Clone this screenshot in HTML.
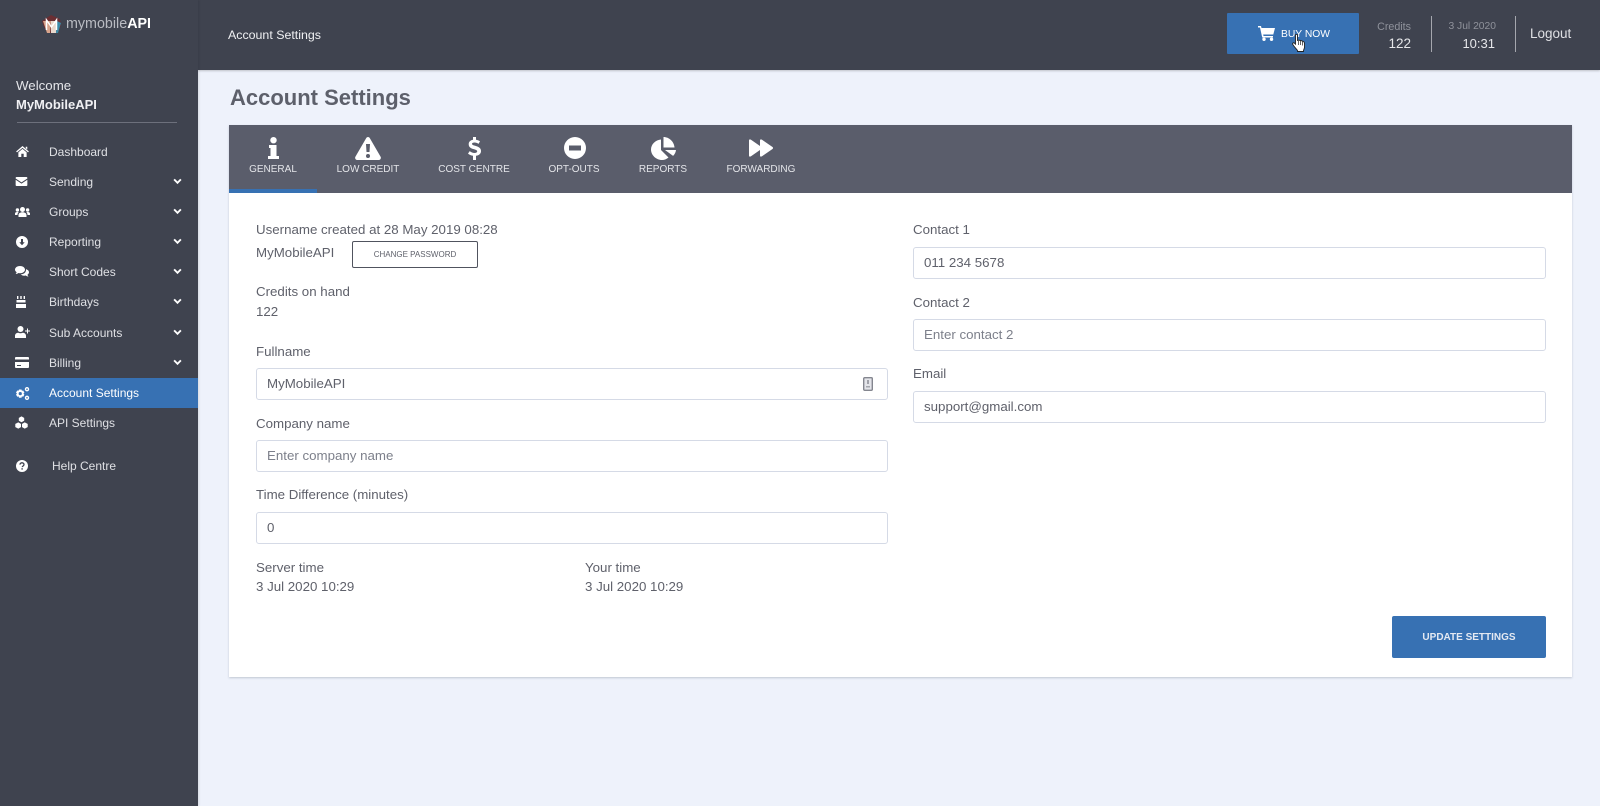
<!DOCTYPE html>
<html>
<head>
<meta charset="utf-8">
<style>
*{box-sizing:border-box}
html,body{margin:0;padding:0}
body{width:1600px;height:806px;overflow:hidden;position:relative;background:#eef2fb;font-family:"Liberation Sans",sans-serif;color:#5f616b}
.a{position:absolute;white-space:nowrap}
.t{position:absolute;white-space:nowrap;height:20px;line-height:20px;font-size:13.3px}
#side{position:absolute;left:0;top:0;width:198px;height:806px;background:#3f434f;box-shadow:1px 0 2px rgba(0,0,0,.1)}
#head{position:absolute;left:198px;top:0;width:1402px;height:70px;background:#3f434f;box-shadow:0 1px 2px rgba(0,0,0,.2)}
.m{position:absolute;left:49px;height:20px;line-height:20px;font-size:12px;color:#dfe0e4;white-space:nowrap}
.i{position:absolute;fill:#fff}
.c{position:absolute;left:172px;width:11px;height:7px;fill:none;stroke:#fff;stroke-width:2.2}
#card{position:absolute;left:229px;top:125px;width:1343px;height:552px;background:#fff;box-shadow:0 1px 2px rgba(60,70,90,.25)}
#tabs{position:absolute;left:229px;top:125px;width:1343px;height:68px;background:#5a5d6b}
.tab{position:absolute;top:163px;width:120px;height:14px;line-height:14px;text-align:center;font-size:10px;color:#e4e5e9;white-space:nowrap}
.inp{position:absolute;height:32px;border:1px solid #d5dae6;border-radius:3px;background:#fff;padding-left:10px;line-height:30px;font-size:13.3px;color:#5f616b;white-space:nowrap}
.ph{color:#7d808b}
</style>
</head>
<body>
<div id="head"></div>
<div id="side"></div>

<svg class="a" style="left:42px;top:15px" width="20" height="19" viewBox="0 0 20 19"><polygon points="9,0 18,4 19,10 16,18 6,18 2,12 0,6" fill="#6b2f33"/><polygon points="1,6 9,6 8,18 5,18" fill="#d8a48c"/><polygon points="9,6 15,6 14,18 9,18" fill="#e8d8cc"/><polygon points="15,6 19,8 16,18 14,18" fill="#3b8aa8"/><path d="M4.500 15V5l5 7 5-7v10" fill="none" stroke="#fff" stroke-width="1.500"/></svg>
<div class="a" style="left:66px;top:15px;line-height:18px;font-size:14.300px;color:#b9bbc2">mymobile<b style="color:#fff">API</b></div>

<div class="a" style="left:16px;top:76px;line-height:20px;font-size:13.300px;color:#e4e5e9">Welcome</div>
<div class="a" style="left:16px;top:95px;line-height:20px;font-size:13px;font-weight:bold;color:#f0f0f3">MyMobileAPI</div>
<div class="a" style="left:17px;top:122px;width:160px;height:1px;background:#6d707c"></div>

<div class="a" style="left:0;top:378px;width:198px;height:30px;background:#3771b3"></div>

<svg class="i" style="left:16px;top:146px" width="13" height="11" viewBox="0 0 14 12"><path d="M7 0l7 6-1 1-6-5-6 5-1-1zM2.500 7L7 3.200 11.500 7v5H8.300V8.500H5.700V12H2.500zM10.500 .8h1.700v3l-1.700-1.400z"/></svg>
<div class="m" style="top:142px">Dashboard</div>

<svg class="i" style="left:15px;top:177px" width="13" height="9" viewBox="0 0 13 10"><path d="M1 0h11a1 1 0 0 1 1 1v.6L6.500 6 0 1.600V1a1 1 0 0 1 1-1zM0 3l6.500 4.400L13 3v6a1 1 0 0 1-1 1H1a1 1 0 0 1-1-1z"/></svg>
<div class="m" style="top:172px">Sending</div>
<svg class="c" style="top:178px" viewBox="0 0 13 8"><path d="M2.500 1.500l4 4 4-4"/></svg>

<svg class="i" style="left:15px;top:207px" width="15" height="10" viewBox="0 0 15 10"><circle cx="7.500" cy="2.500" r="2.500"/><circle cx="2.400" cy="3" r="1.700"/><circle cx="12.600" cy="3" r="1.700"/><path d="M3.500 10V8c0-1.700 1.500-2.800 4-2.800s4 1.100 4 2.800v2zM0 8V6.500C0 5.600 1 5 2.400 5c.6 0 1 .1 1.300.3C2.800 6 2.500 7 2.500 8zM15 8V6.500c0-.9-1-1.500-2.400-1.500-.6 0-1 .1-1.300.3.900.7 1.200 1.700 1.200 2.700z"/></svg>
<div class="m" style="top:202px">Groups</div>
<svg class="c" style="top:208px" viewBox="0 0 13 8"><path d="M2.500 1.500l4 4 4-4"/></svg>

<svg class="i" style="left:16px;top:236px" width="12" height="12" viewBox="0 0 12 12"><path fill-rule="evenodd" d="M6 0a6 6 0 1 1 0 12A6 6 0 0 1 6 0zM5 3v3.200H3.300L6 9.200l2.700-3H7V3z"/></svg>
<div class="m" style="top:232px">Reporting</div>
<svg class="c" style="top:238px" viewBox="0 0 13 8"><path d="M2.500 1.500l4 4 4-4"/></svg>

<svg class="i" style="left:15px;top:266px" width="14" height="12" viewBox="0 0 14 12"><path d="M5 0c2.800 0 5 1.600 5 3.600S7.800 7.200 5 7.200c-.6 0-1.100-.1-1.600-.2C2.600 7.700 1.500 8 .6 8c.5-.5.900-1.100 1-1.800C.6 5.500 0 4.600 0 3.600 0 1.600 2.200 0 5 0z"/><path d="M11 3.300c1.800.4 3 1.600 3 3 0 1-.6 1.800-1.500 2.400.1.700.5 1.300 1 1.800-.9 0-1.900-.3-2.700-1-.5.100-1 .2-1.500.2-1.500 0-2.800-.5-3.600-1.300 3 0 5.300-1.900 5.300-4.500z"/></svg>
<div class="m" style="top:262px">Short Codes</div>
<svg class="c" style="top:268px" viewBox="0 0 13 8"><path d="M2.500 1.500l4 4 4-4"/></svg>

<svg class="i" style="left:16px;top:296px" width="10" height="12" viewBox="0 0 10 12"><path d="M1 0h1.400v3H1zM4.300 0h1.400v3H4.300zM7.600 0H9v3H7.600zM.5 4h9v2.500h-9zM0 8h10v4H0z"/></svg>
<div class="m" style="top:292px">Birthdays</div>
<svg class="c" style="top:298px" viewBox="0 0 13 8"><path d="M2.500 1.500l4 4 4-4"/></svg>

<svg class="i" style="left:15px;top:326px" width="15" height="12" viewBox="0 0 15 12"><circle cx="5.500" cy="3" r="3"/><path d="M0 12V9.800C0 7.800 1.800 6.800 3.200 6.800c.7.300 1.500.5 2.300.5s1.600-.2 2.300-.5c1.400 0 3.200 1 3.200 3V12zM12 2.500h1v2h2v1h-2v2h-1v-2h-2v-1h2z"/></svg>
<div class="m" style="top:323px">Sub Accounts</div>
<svg class="c" style="top:329px" viewBox="0 0 13 8"><path d="M2.500 1.500l4 4 4-4"/></svg>

<svg class="i" style="left:15px;top:357px" width="14" height="11" viewBox="0 0 14 11"><path d="M1 0h12a1 1 0 0 1 1 1v1.500H0V1a1 1 0 0 1 1-1zM0 5h14v5a1 1 0 0 1-1 1H1a1 1 0 0 1-1-1zm2 3v1h4V8z" fill-rule="evenodd"/></svg>
<div class="m" style="top:353px">Billing</div>
<svg class="c" style="top:359px" viewBox="0 0 13 8"><path d="M2.500 1.500l4 4 4-4"/></svg>

<svg class="i" style="left:15px;top:387px" width="15" height="13" viewBox="0 0 15 13"><path fill-rule="evenodd" d="M4 2.500h2.500l.4 1.300 1.300-.3 1.200 2.100-1 1 1 1-1.200 2.100-1.300-.3-.4 1.300H4l-.4-1.300-1.300.3L1 7.600l1-1-1-1 1.200-2.100 1.300.3zM5.250 5a1.600 1.600 0 1 0 0 3.200 1.600 1.600 0 0 0 0-3.200z"/><path fill-rule="evenodd" d="M12 0a2.200 2.200 0 1 1 0 4.400A2.200 2.200 0 0 1 12 0zm0 1.400a.8.8 0 1 0 0 1.600.8.8 0 0 0 0-1.600zM12 8.600a2.200 2.200 0 1 1 0 4.400 2.200 2.200 0 0 1 0-4.400zm0 1.400a.8.8 0 1 0 0 1.600.8.8 0 0 0 0-1.600z"/></svg>
<div class="m" style="top:383px;color:#fff">Account Settings</div>

<svg class="i" style="left:15px;top:416px" width="13" height="13" viewBox="0 0 13 13"><path d="M6.500 0l3 1.700v3.200l-3 1.700-3-1.700V1.700zM3.300 6l3 1.700v3.600L3.300 13 0 11.300V7.700zM9.700 6L13 7.700v3.600L9.700 13l-3-1.700V7.700z" stroke="#3f434f" stroke-width=".6"/></svg>
<div class="m" style="top:413px">API Settings</div>

<svg class="i" style="left:16px;top:460px" width="12" height="12" viewBox="0 0 12 12"><circle cx="6" cy="6" r="6"/><path d="M4 4.600C4 3.400 5 2.800 6 2.800s2 .6 2 1.700c0 1.500-1.700 1.400-1.700 2.600" fill="none" stroke="#3f434f" stroke-width="1.300"/><rect x="5.400" y="8.200" width="1.400" height="1.400" fill="#3f434f"/></svg>
<div class="m" style="top:456px;left:52px">Help Centre</div>

<div class="a" style="left:228px;top:25px;line-height:20px;font-size:12.400px;color:#f0f1f3">Account Settings</div>

<div class="a" style="left:1227px;top:13px;width:132px;height:41px;background:#3771b3;border-radius:1px"></div>
<svg class="i" style="left:1258px;top:26px" width="17" height="15" viewBox="0 0 17 15"><path d="M0 0h3l.5 2H17l-1.700 6.500H5.200l.3 1.500H15v1.500H4.200L2 1.500H0z"/><circle cx="6" cy="13.300" r="1.700"/><circle cx="13.500" cy="13.300" r="1.700"/></svg>
<div class="a" style="left:1281px;top:27px;line-height:16px;font-size:10.300px;color:#fff">BUY NOW</div>
<svg class="a" style="left:1292px;top:34px" width="14" height="19" viewBox="0 0 14 19"><path d="M3.500 1.200c0-1.200 2-1.200 2 0v5.300l1.500-.3 1.500.3 1.500.4 1.500.6c1 .5 1 1.500 1 2.500v3c0 1.500-.7 2.200-1 3.500v1H5.500v-1c-1-1.500-3.500-4-4.700-6-.7-1.300.8-2.300 1.700-1.300l1 1z" fill="#fff" stroke="#222" stroke-width=".9"/><path d="M6.500 7v4M8.500 7v4M10.500 7.500v4" stroke="#222" stroke-width=".7"/></svg>

<div class="a" style="left:1300px;top:19px;width:111px;text-align:right;line-height:16px;font-size:10.700px;color:#8f929b">Credits</div>
<div class="a" style="left:1300px;top:35px;width:111px;text-align:right;line-height:18px;font-size:13.500px;color:#e6e7ea">122</div>
<div class="a" style="left:1431px;top:16px;width:1px;height:36px;background:#a5a7ae"></div>
<div class="a" style="left:1400px;top:19px;width:96px;text-align:right;line-height:16px;font-size:10.300px;color:#8f929b">3 Jul 2020</div>
<div class="a" style="left:1400px;top:35px;width:95px;text-align:right;line-height:18px;font-size:13px;color:#e6e7ea">10:31</div>
<div class="a" style="left:1515px;top:16px;width:1px;height:36px;background:#a5a7ae"></div>
<div class="a" style="left:1530px;top:25px;line-height:18px;font-size:13.500px;color:#dfe0e4">Logout</div>

<div class="a" style="left:230px;top:84px;line-height:28px;font-size:22px;font-weight:bold;color:#5d606b">Account Settings</div>

<div id="card"></div>
<div id="tabs"></div>
<div class="a" style="left:229px;top:189px;width:88px;height:4px;background:#3771b3"></div>

<svg class="i" style="left:268px;top:137px" width="11" height="22" viewBox="0 0 11 22"><circle cx="5.500" cy="3.200" r="3.200"/><path d="M1 8h7.500v11H11v3H0v-3h2.500v-8H1z"/></svg>
<svg class="i" style="left:355px;top:137px" width="26" height="23" viewBox="0 0 26 23"><path fill-rule="evenodd" d="M13 0c.8 0 1.400.5 1.800 1.100L25.600 19.800c.8 1.400-.2 3.200-1.900 3.200H2.300C.6 23-.4 21.200.4 19.800L11.200 1.100C11.600.5 12.200 0 13 0zm-2 7l.5 8h3l.5-8zm2 10a2 2 0 1 0 0 4 2 2 0 0 0 0-4z"/></svg>
<svg class="i" style="left:468px;top:137px" width="13" height="23" viewBox="0 0 13 23"><path d="M5 0h3v2.800c1.500.2 3 .8 4 1.600l-1.500 2.500C9.300 6 8 5.500 6.500 5.500 5 5.500 4 6 4 6.900c0 1 1.300 1.400 3.500 2 3 .9 5.500 2 5.500 5.100 0 2.700-2 4.400-5 4.800V23H5v-4.200c-2-.3-3.700-1.100-5-2.200l1.700-2.500c1.500 1.200 3.100 1.900 4.800 1.900 1.700 0 2.700-.6 2.700-1.700 0-1.100-1.200-1.500-3.500-2.200C2.800 11.300.7 10 .7 7.200.7 4.900 2.400 3.200 5 2.800z"/></svg>
<svg class="i" style="left:564px;top:137px" width="22" height="22" viewBox="0 0 22 22"><path fill-rule="evenodd" d="M11 0a11 11 0 1 1 0 22A11 11 0 0 1 11 0zM5 8.500v5h12v-5z"/></svg>
<svg class="i" style="left:651px;top:137px" width="25" height="23" viewBox="0 0 25 23"><path d="M10 2.500V13l7.500 7.500C15.700 22 13.500 23 11 23 5 23 0 18 0 12.500 0 7.300 4.500 3 10 2.500z"/><path d="M12.500 0C18 0 23 4.500 23.500 10.500H12.500z"/><path d="M14 13h11c-.3 2.400-1.300 4.400-2.900 5.900z"/></svg>
<svg class="i" style="left:749px;top:139px" width="24" height="18" viewBox="0 0 24 18"><path d="M0 1.500C0 .3 1 0 2 .7L11 7V1.500C11 .3 12 0 13 .7L23.500 8c.7.5.7 1.500 0 2L13 17.300c-1 .7-2 .4-2-.8V11l-9 6.300c-1 .7-2 .4-2-.8z"/></svg>

<div class="tab" style="left:213px">GENERAL</div>
<div class="tab" style="left:308px">LOW CREDIT</div>
<div class="tab" style="left:414px">COST CENTRE</div>
<div class="tab" style="left:514px">OPT-OUTS</div>
<div class="tab" style="left:603px">REPORTS</div>
<div class="tab" style="left:701px">FORWARDING</div>

<div class="t" style="left:256px;top:220px">Username created at 28 May 2019 08:28</div>
<div class="t" style="left:256px;top:243px">MyMobileAPI</div>
<div class="a" style="left:352px;top:241px;width:126px;height:27px;border:1px solid #50535e;border-radius:2px;background:#fff;text-align:center;line-height:25px;font-size:8px;color:#5f616b">CHANGE PASSWORD</div>
<div class="t" style="left:256px;top:282px">Credits on hand</div>
<div class="t" style="left:256px;top:302px">122</div>
<div class="t" style="left:256px;top:342px">Fullname</div>
<div class="inp" style="left:256px;top:368px;width:632px">MyMobileAPI</div>
<svg class="a" style="left:863px;top:377px" width="10" height="14" viewBox="0 0 10 14"><rect x=".7" y=".7" width="8.600" height="12.600" rx="1" fill="#e4e5ea" stroke="#84868f" stroke-width="1.400"/><rect x="4.300" y="3" width="1.400" height="4" fill="#84868f"/><rect x="3" y="9" width="4" height="1.500" fill="#a5a7ae"/></svg>
<div class="t" style="left:256px;top:414px">Company name</div>
<div class="inp ph" style="left:256px;top:440px;width:632px">Enter company name</div>
<div class="t" style="left:256px;top:485px">Time Difference (minutes)</div>
<div class="inp" style="left:256px;top:512px;width:632px">0</div>
<div class="t" style="left:256px;top:558px">Server time</div>
<div class="t" style="left:256px;top:577px">3 Jul 2020 10:29</div>
<div class="t" style="left:585px;top:558px">Your time</div>
<div class="t" style="left:585px;top:577px">3 Jul 2020 10:29</div>

<div class="t" style="left:913px;top:220px">Contact 1</div>
<div class="inp" style="left:913px;top:247px;width:633px">011 234 5678</div>
<div class="t" style="left:913px;top:293px">Contact 2</div>
<div class="inp ph" style="left:913px;top:319px;width:633px">Enter contact 2</div>
<div class="t" style="left:913px;top:364px">Email</div>
<div class="inp" style="left:913px;top:391px;width:633px">support@gmail.com</div>

<div class="a" style="left:1392px;top:616px;width:154px;height:42px;background:#3771b3;border-radius:2px;text-align:center;line-height:44px;font-size:10px;font-weight:bold;color:#e4e9f2">UPDATE SETTINGS</div>
</body>
</html>
